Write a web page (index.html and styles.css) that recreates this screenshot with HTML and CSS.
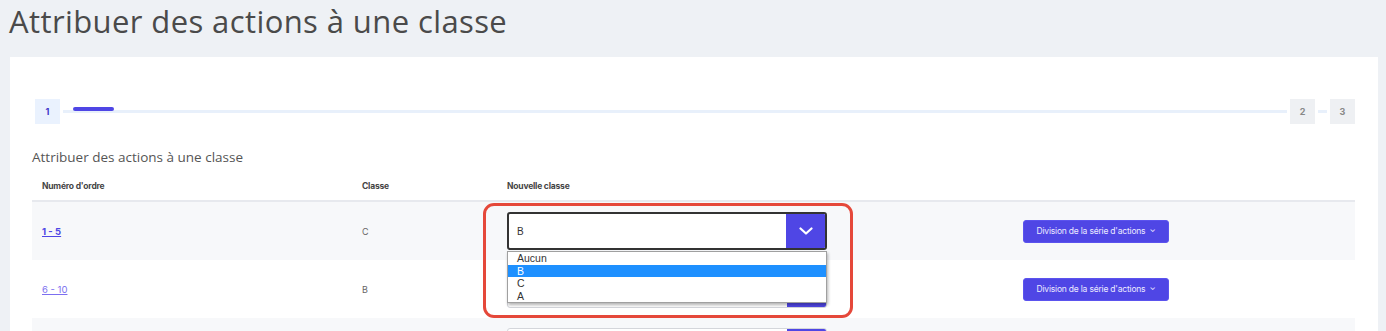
FILE: index.html
```html
<!DOCTYPE html>
<html lang="fr">
<head>
<meta charset="utf-8">
<title>Attribuer des actions à une classe</title>
<link rel="stylesheet" href="styles.css">
</head>
<body>
<h1 class="page-title">Attribuer des actions à une classe</h1>
<div class="card">
  <div class="stepper">
    <div class="step step-active">1</div>
    <div class="step-line"><div class="step-progress"></div></div>
    <div class="step">2</div>
    <div class="step-line step-line-short"></div>
    <div class="step">3</div>
  </div>
  <h2 class="section-title">Attribuer des actions à une classe</h2>
  <div class="table">
    <div class="row head">
      <div class="cell">Numéro d'ordre</div>
      <div class="cell">Classe</div>
      <div class="cell">Nouvelle classe</div>
      <div class="cell"></div>
    </div>
    <div class="row alt">
      <div class="cell"><a class="link link-strong" href="#">1 - 5</a></div>
      <div class="cell val">C</div>
      <div class="cell sel-cell">
        <div class="select select-focus">
          <span class="select-value">B</span>
          <span class="select-btn"><svg width="14" height="8" viewBox="0 0 14 8"><path d="M1.5 1.5 L7 6.5 L12.5 1.5" fill="none" stroke="#fff" stroke-width="2.2" stroke-linecap="round" stroke-linejoin="round"/></svg></span>
        </div>
        <ul class="options">
          <li>Aucun</li>
          <li class="opt-hl">B</li>
          <li>C</li>
          <li>A</li>
        </ul>
        <div class="highlight"></div>
      </div>
      <div class="cell"><button class="btn">Division de la série d'actions <span class="caret">&#8964;</span></button></div>
    </div>
    <div class="row">
      <div class="cell"><a class="link" href="#">6 - 10</a></div>
      <div class="cell val">B</div>
      <div class="cell sel-cell">
        <div class="select">
          <span class="select-value"></span>
          <span class="select-btn"></span>
        </div>
      </div>
      <div class="cell"><button class="btn">Division de la série d'actions <span class="caret">&#8964;</span></button></div>
    </div>
    <div class="row alt">
      <div class="cell"></div>
      <div class="cell"></div>
      <div class="cell sel-cell">
        <div class="select">
          <span class="select-value"></span>
          <span class="select-btn"></span>
        </div>
      </div>
      <div class="cell"></div>
    </div>
  </div>
</div>
</body>
</html>
```
FILE: styles.css
```css
* { box-sizing: border-box; }
html, body { margin: 0; padding: 0; }
body {
  background: #eef1f5;
  font-family: "Inter", "Noto Sans", sans-serif;
  color: #555;
  overflow: hidden;
  height: 331px;
}
.page-title {
  margin: 0;
  padding: 0 0 0 9px;
  height: 57px;
  font-family: "Open Sans", "Noto Sans", sans-serif;
  font-weight: 400;
  font-size: 31px;
  line-height: 42px;
  color: #4a4a4a;
  letter-spacing: 0.4px;
}
.card {
  background: #fff;
  margin: 0 8px 0 10px;
  padding: 42px 23px 0 22px;
  height: 300px;
}
.stepper {
  display: flex;
  align-items: center;
  padding-left: 3px;
  height: 25px;
}
.step {
  width: 25px;
  height: 25px;
  flex: none;
  background: #eef0f3;
  color: #888;
  font-size: 9px;
  font-weight: 700;
  display: flex;
  align-items: center;
  justify-content: center;
}
.step-active { background: #eaf2fe; color: #4338ca; }
.step-line {
  flex: 1;
  height: 3px;
  background: #e8f0fb;
  margin: 0 3px;
  position: relative;
}
.step-line-short { flex: none; width: 9px; }
.step-progress {
  position: absolute;
  left: 10px;
  top: -3px;
  width: 41px;
  height: 4px;
  border-radius: 2px;
  background: #4f46e5;
}
.section-title {
  margin: 24px 0 0;
  font-family: "Open Sans", "Noto Sans", sans-serif;
  font-weight: 400;
  font-size: 13.5px;
  line-height: 18px;
  color: #555;
}
.table { margin-top: 6px; }
.row {
  display: grid;
  grid-template-columns: 320px 145px 515px 1fr;
  height: 58px;
  align-items: center;
}
.row.head {
  height: 30px;
  border-bottom: 2px solid #e7e9ee;
}
.row.alt { background: #f7f8fa; }
.cell {
  padding-left: 10px;
  font-size: 9px;
  position: relative;
}
.head .cell {
  font-weight: 700;
  font-size: 8.5px;
  color: #444;
  letter-spacing: -0.2px;
}
.val { color: #666; }
.link { color: #7c6ff0; font-size: 9.5px; }
.link-strong { color: #4f46e5; font-weight: 700; }
.select {
  width: 320px;
  height: 38px;
  border: 1px solid #d4d6db;
  border-radius: 3px;
  background: #fff;
  display: flex;
  overflow: hidden;
}
.select-focus { border: 2px solid #333; }
.select-value {
  flex: 1;
  display: flex;
  align-items: center;
  padding-left: 8px;
  font-family: "Liberation Sans", Arial, sans-serif;
  font-size: 10px;
  color: #333;
}
.select-btn {
  width: 39px;
  background: #4f46e5;
  display: flex;
  align-items: center;
  justify-content: center;
}
.options {
  position: absolute;
  left: 10px;
  top: 39px;
  width: 320px;
  margin: 0;
  padding: 0;
  list-style: none;
  background: #fff;
  border: 1px solid #a0a0a0;
  box-shadow: 1px 2px 3px rgba(0,0,0,0.3);
  z-index: 2;
  font-family: "Liberation Sans", Arial, sans-serif;
  font-size: 10.5px;
  color: #333;
}
.options li {
  height: 12.5px;
  line-height: 12.5px;
  padding-left: 9px;
}
.options li.opt-hl { background: #1e90ff; color: #fff; }
.highlight {
  position: absolute;
  left: -14px;
  top: -9px;
  width: 370px;
  height: 115px;
  border: 3px solid #e5483a;
  border-radius: 11px;
  z-index: 3;
  pointer-events: none;
}
.btn {
  width: 146px;
  height: 23px;
  margin-left: 1px;
  border: 1px solid #5b53ee;
  border-radius: 3px;
  background: #4f46e5;
  color: #eceaff;
  font-family: "Inter", "Noto Sans", sans-serif;
  font-size: 8.5px;
  letter-spacing: -0.2px;
  padding: 0;
  display: flex;
  align-items: center;
  justify-content: center;
  gap: 4px;
}
.caret { font-size: 8px; line-height: 8px; position: relative; top: -2px; }
```
